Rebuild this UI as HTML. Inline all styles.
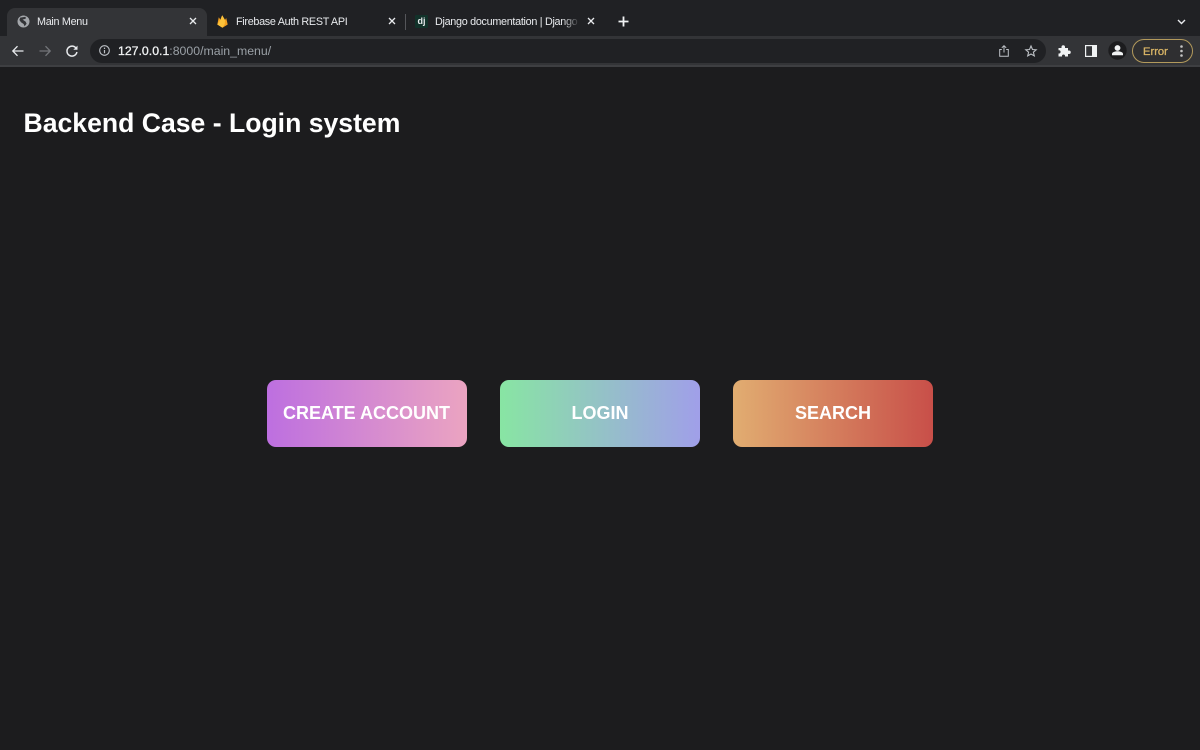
<!DOCTYPE html>
<html>
<head>
<meta charset="utf-8">
<style>
html,body{margin:0;padding:0;width:1200px;height:750px;overflow:hidden;background:#1c1c1e;font-family:"Liberation Sans",sans-serif;}
.abs{position:absolute;}
#tabbar{left:0;top:0;width:1200px;height:36px;background:#202124;}
#toolbar{left:0;top:36px;width:1200px;height:30px;background:#333437;}
#line{left:0;top:65px;width:1200px;height:2px;background:#3e3f42;}
#tab{left:7px;top:8px;width:200px;height:28px;background:#333437;border-radius:8px 8px 0 0;}
#omni{left:90px;top:39px;width:956px;height:24px;background:#202124;border-radius:12px;}
.t{position:absolute;font-size:10.8px;letter-spacing:-.3px;line-height:14px;color:#e8eaed;white-space:nowrap;filter:blur(.25px);}
#url{left:118px;top:43px;font-size:12.3px;line-height:16px;color:#9aa0a6;position:absolute;white-space:nowrap;filter:blur(.25px);}
#url b{font-weight:normal;color:#f1f3f4;-webkit-text-stroke:.3px #f1f3f4;}
h1{position:absolute;left:23.5px;top:106px;margin:0;font-size:26.6px;line-height:34px;font-weight:bold;color:#fff;white-space:nowrap;filter:blur(.25px);}
.btn{position:absolute;top:380px;width:200px;height:67px;border-radius:9px;}
.lbl{position:absolute;left:0;top:0;width:100%;height:67px;color:#fff;font-size:18px;line-height:67px;text-align:center;font-weight:bold;filter:blur(.2px);}
svg{position:absolute;overflow:visible;filter:blur(.25px);}
</style>
</head>
<body>
<div class="abs" id="tabbar"></div>
<div class="abs" id="toolbar"></div>
<div class="abs" id="line"></div>
<div class="abs" id="tab"></div>
<div class="abs" id="omni"></div>

<!-- globe favicon -->
<svg style="left:17px;top:15px" width="13" height="13" viewBox="0 0 13 13"><circle cx="6.5" cy="6.5" r="6" fill="#a4a7ab"/><path d="M3.2 2.6 L8.6 1.8 L8.8 3.6 L5.6 4.6 L8.6 6.6 L9.6 8.8 L7.6 11.2 L6.6 9 L4 7.2 L2.4 5Z" fill="#333437"/></svg>
<div class="t" style="left:37px;top:15px">Main Menu</div>
<svg style="left:189px;top:17px" width="8" height="8" viewBox="0 0 8 8"><path d="M1 1L7 7M7 1L1 7" stroke="#e8eaed" stroke-width="1.3"/></svg>

<!-- firebase -->
<svg style="left:217px;top:15px" width="11" height="13" viewBox="0 0 11 13"><path d="M0.3 9.5L1.8 2.2L3.4 4.8L5.2 0.3L8 5L9.2 3L10.7 9.5L5.5 12.8Z" fill="#f5a01f"/><path d="M5.2 0.3L8 5L7.8 9L5.5 12.8L0.3 9.5L3.4 4.8Z" fill="#fcc23a"/></svg>
<div class="t" style="left:236px;top:15px">Firebase Auth REST API</div>
<svg style="left:388px;top:17px" width="8" height="8" viewBox="0 0 8 8"><path d="M1 1L7 7M7 1L1 7" stroke="#e8eaed" stroke-width="1.3"/></svg>
<div class="abs" style="left:405px;top:14px;width:1px;height:16px;background:#55565a"></div>

<!-- django -->
<div class="abs" style="left:415px;top:15px;width:13px;height:13px;background:#12322a;border-radius:1px;color:#e8eaed;font-size:9px;font-weight:bold;line-height:12px;text-align:center">dj</div>
<div class="t" style="left:435px;top:15px;width:145px;overflow:hidden;-webkit-mask-image:linear-gradient(90deg,#000 88%,transparent);mask-image:linear-gradient(90deg,#000 88%,transparent)">Django documentation | Django documentation</div>
<svg style="left:587px;top:17px" width="8" height="8" viewBox="0 0 8 8"><path d="M1 1L7 7M7 1L1 7" stroke="#e8eaed" stroke-width="1.3"/></svg>
<svg style="left:618px;top:16px" width="11" height="11" viewBox="0 0 11 11"><path d="M5.5 0.5V10.5M0.5 5.5H10.5" stroke="#f1f3f4" stroke-width="1.8"/></svg>
<svg style="left:1177px;top:19px" width="9" height="6" viewBox="0 0 9 6"><path d="M1 1L4.5 4.5L8 1" stroke="#e8eaed" stroke-width="1.4" fill="none"/></svg>

<!-- nav -->
<svg style="left:12px;top:45px" width="12" height="12" viewBox="0 0 12 12"><path d="M11.5 6H1M5.5 1.2L0.8 6L5.5 10.8" stroke="#e8eaed" stroke-width="1.3" fill="none"/></svg>
<svg style="left:39px;top:45px" width="12" height="12" viewBox="0 0 12 12"><path d="M0.5 6H11M6.5 1.2L11.2 6L6.5 10.8" stroke="#737579" stroke-width="1.3" fill="none"/></svg>
<svg style="left:66px;top:45px" width="12" height="12" viewBox="0 0 12 12"><path d="M10.3 3.6A5 5 0 1 0 10.9 7" stroke="#e8eaed" stroke-width="1.5" fill="none"/><path d="M11.5 0.6V4.8H7.3Z" fill="#e8eaed"/></svg>
<svg style="left:99px;top:45px" width="11" height="11" viewBox="0 0 11 11"><circle cx="5.5" cy="5.5" r="4.8" stroke="#bdc1c6" stroke-width="1.1" fill="none"/><path d="M5.5 5V8.2M5.5 2.6V4" stroke="#bdc1c6" stroke-width="1.2"/></svg>
<div id="url"><b>127.0.0.1</b>:8000/main_menu/</div>

<!-- right toolbar -->
<svg style="left:999px;top:45px" width="10" height="12" viewBox="0 0 10 12"><path d="M2.8 4.5H0.7V11.3H9.3V4.5H7.2M5 7.5V0.8M2.8 2.8L5 0.7L7.2 2.8" stroke="#bdc1c6" stroke-width="1" fill="none"/></svg>
<svg style="left:1025px;top:45px" width="12" height="12" viewBox="0 0 12 12"><path d="M6 1L7.5 4.5L11.2 4.8L8.4 7.2L9.3 10.9L6 9L2.7 10.9L3.6 7.2L0.8 4.8L4.5 4.5Z" stroke="#bdc1c6" stroke-width="1.1" fill="none"/></svg>
<svg style="left:1058px;top:44px" width="13" height="13" viewBox="0 0 13 13"><path d="M0.5 4H3.5V3A1.7 1.7 0 0 1 7 3V4H10V6.5H11A1.7 1.7 0 0 1 11 10H10V12.5H7V11.5A1.6 1.6 0 0 0 4 11.5V12.5H0.5V9.5H1.5A1.7 1.7 0 0 0 1.5 6.3H0.5Z" fill="#f1f3f4"/></svg>
<svg style="left:1085px;top:45px" width="12" height="12" viewBox="0 0 12 12"><rect x="0.6" y="0.6" width="10.8" height="10.8" fill="none" stroke="#f1f3f4" stroke-width="1.2"/><rect x="7" y="0.6" width="4.4" height="10.8" fill="#f1f3f4"/></svg>
<svg style="left:1108px;top:41px" width="19" height="19" viewBox="0 0 19 19"><circle cx="9.5" cy="9.5" r="9.2" fill="#1c1c1e"/><circle cx="9.5" cy="7" r="2.9" fill="#f1f3f4"/><path d="M4 14.3V12.8C4 10.9 7.5 10.2 9.5 10.2S15 10.9 15 12.8V14.3Z" fill="#f1f3f4"/></svg>
<div class="abs" style="left:1132px;top:39px;width:59px;height:22px;border:1.3px solid #b39a5c;border-radius:12px;background:#2f2f31"></div>
<div class="abs" style="left:1143px;top:44px;font-size:11.2px;line-height:15px;color:#d9b566;-webkit-text-stroke:.3px #d9b566;filter:blur(.25px);margin-top:.5px">Error</div>
<svg style="left:1180px;top:45px" width="3" height="12" viewBox="0 0 3 12"><circle cx="1.5" cy="1.5" r="1.3" fill="#c4c4c4"/><circle cx="1.5" cy="6" r="1.3" fill="#c4c4c4"/><circle cx="1.5" cy="10.5" r="1.3" fill="#c4c4c4"/></svg>

<h1>Backend Case - Login system</h1>

<div class="btn" style="left:266.5px;background:linear-gradient(90deg,#bd6fe0,#eba4c1)"><div class="lbl">CREATE ACCOUNT</div></div>
<div class="btn" style="left:500px;background:linear-gradient(90deg,#88e5a3,#a09fe9)"><div class="lbl">LOGIN</div></div>
<div class="btn" style="left:733px;background:linear-gradient(90deg,#e1ad71,#c84f49)"><div class="lbl">SEARCH</div></div>
</body>
</html>
